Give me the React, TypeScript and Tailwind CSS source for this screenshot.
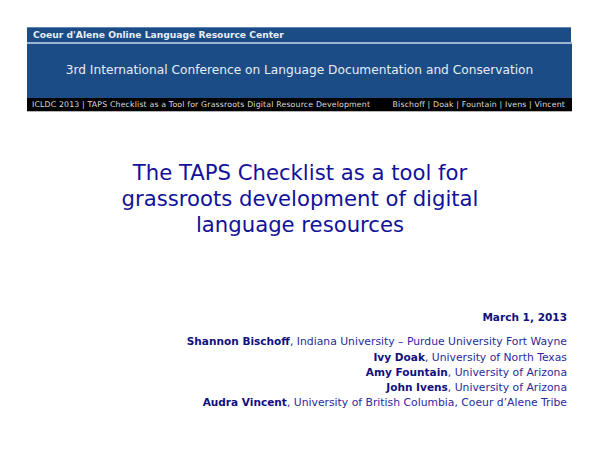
export default function App() {
  return (
    <div className="w-[600px] h-[464px] bg-white overflow-hidden flex flex-col pt-[27px] font-['DejaVu_Sans',sans-serif]">
      <div className="mx-[27px] w-[545px] flex flex-col">
        <div className="h-[15px] bg-[#1c4c85] border-t border-[#5f86b5] mr-[1px] flex items-center pl-[6px]">
          <span className="text-[9.17px] font-bold text-[#e8eef6] leading-none whitespace-nowrap">Coeur d'Alene Online Language Resource Center</span>
        </div>
        <div className="h-[2px] bg-[#9db5d3]" />
        <div className="h-[54px] bg-[#1c4c85] flex items-center justify-center pb-[2px]">
          <span className="text-[12.2px] text-[#e6edf5] leading-none whitespace-nowrap">3rd International Conference on Language Documentation and Conservation</span>
        </div>
        <div className="h-[14px] bg-black border-b border-[#b5b5b5] flex items-center justify-between pl-[5px] pr-[7px]">
          <span className="text-[7.8px] tracking-[0.16px] text-[#dddddd] leading-none whitespace-nowrap">ICLDC 2013 | TAPS Checklist as a Tool for Grassroots Digital Resource Development</span>
          <span className="text-[7.8px] tracking-[0.16px] text-[#dddddd] leading-none whitespace-nowrap">Bischoff | Doak | Fountain | Ivens | Vincent</span>
        </div>
      </div>
      <div className="mt-[48px] flex flex-col items-center text-[21.2px] leading-[26px] text-[#11119a]">
        <div className="whitespace-nowrap">The TAPS Checklist as a tool for</div>
        <div className="whitespace-nowrap">grassroots development of digital</div>
        <div className="whitespace-nowrap">language resources</div>
      </div>
      <div className="mt-[72px] pr-[33px] flex flex-col items-end text-[10.8px] text-[#2a2a9c] leading-[15.25px] whitespace-nowrap">
        <div className="font-bold text-[10.55px] text-[#10107f] mb-[9px]">March 1, 2013</div>
        <div><b className="text-[10.55px] text-[#10107f]">Shannon Bischoff</b>, Indiana University – Purdue University Fort Wayne</div>
        <div><b className="text-[10.55px] text-[#10107f]">Ivy Doak</b>, University of North Texas</div>
        <div><b className="text-[10.55px] text-[#10107f]">Amy Fountain</b>, University of Arizona</div>
        <div><b className="text-[10.55px] text-[#10107f]">John Ivens</b>, University of Arizona</div>
        <div><b className="text-[10.55px] text-[#10107f]">Audra Vincent</b>, University of British Columbia, Coeur d’Alene Tribe</div>
      </div>
    </div>
  );
}
